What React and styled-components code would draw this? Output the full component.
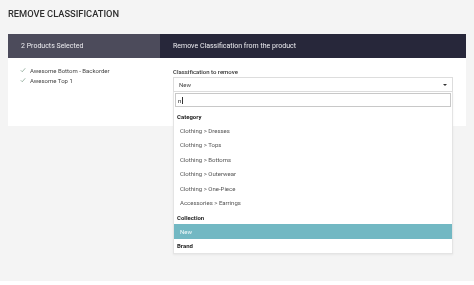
import React from 'react';
import styled, { createGlobalStyle } from 'styled-components';

const Global = createGlobalStyle`
  html, body { margin: 0; padding: 0; background: #fff; }
  body { font-family: Roboto, "Liberation Sans", sans-serif; -webkit-font-smoothing: antialiased; }
  * { box-sizing: border-box; }
`;

const Page = styled.div`
  height: 281px;
  background: #f4f4f4;
  padding: 0 8px;
  will-change: transform;
`;

const Title = styled.h1`
  margin: 0;
  height: 34px;
  padding-top: 8px;
  font-size: 9.3px;
  font-weight: 500;
  line-height: 12px;
  color: #2e2e2e;
  white-space: nowrap;
`;

const Panel = styled.div`
  background: #fff;
`;

const Header = styled.div`
  display: grid;
  grid-template-columns: 152px 1fr;
  height: 24px;
`;

const HeaderCell = styled.div`
  display: flex;
  align-items: center;
  padding-left: ${({ pad }) => pad}px;
  background: ${({ dark }) => (dark ? '#27273a' : '#4c4b5b')};
  color: #ececf0;
  font-size: 7px;
`;

const Body = styled.div`
  display: grid;
  grid-template-columns: 152px 1fr;
  height: 68px;
`;

const ProductList = styled.ul`
  list-style: none;
  margin: 0;
  padding: 7px 0 0 12px;
`;

const Product = styled.li`
  display: flex;
  align-items: center;
  gap: 3px;
  height: 10px;
  font-size: 6px;
  color: #444;
`;

const Check = styled.span`
  width: 6px;
  height: 6px;
  display: inline-flex;
  margin-right: 1px;
`;

const Form = styled.div`
  padding: 10px 13px 0 13px;
`;

const Label = styled.div`
  font-size: 6px;
  font-weight: 500;
  color: #333;
  height: 9px;
  line-height: 8px;
`;

const SelectWrap = styled.div`
  position: relative;
`;

const SelectBox = styled.div`
  display: flex;
  align-items: center;
  justify-content: space-between;
  height: 15px;
  padding: 0 5px;
  border: 1px solid #ddd;
  background: #fff;
  font-size: 6px;
  color: #444;
`;

const Caret = styled.span`
  width: 0;
  height: 0;
  border-left: 2px solid transparent;
  border-right: 2px solid transparent;
  border-top: 2.5px solid #333;
`;

const Dropdown = styled.div`
  position: absolute;
  left: 0;
  right: 0;
  top: 15px;
  background: #fff;
  border: 1px solid #e4e4e4;
  border-top: none;
  box-shadow: 0 1px 2px rgba(0, 0, 0, 0.06);
`;

const SearchRow = styled.div`
  padding: 1px 1px 2px 1px;
`;

const Search = styled.div`
  height: 14px;
  border: 1px solid #c8c8c8;
  font-size: 6px;
  color: #222;
  display: flex;
  align-items: center;
  padding-left: 2px;
`;

const Cursor = styled.span`
  display: inline-block;
  width: 0.6px;
  height: 7px;
  background: #333;
  margin-left: 0.5px;
`;

const GroupHead = styled.div`
  height: 14px;
  display: flex;
  align-items: center;
  padding-left: 3px;
  font-size: 6px;
  font-weight: 700;
  color: #1e1e1e;
`;

const Option = styled.div`
  height: 14.5px;
  display: flex;
  align-items: center;
  padding-left: 6px;
  font-size: 6px;
  color: ${({ active }) => (active ? '#f2fafb' : '#555')};
  background: ${({ active }) => (active ? '#72b8c3' : 'transparent')};
`;

const products = ['Awesome Bottom - Backorder', 'Awesome Top 1'];

const groups = [
  {
    name: 'Category',
    items: [
      'Clothing > Dresses',
      'Clothing > Tops',
      'Clothing > Bottoms',
      'Clothing > Outerwear',
      'Clothing > One-Piece',
      'Accessories > Earrings',
    ],
  },
  { name: 'Collection', items: ['New'] },
  { name: 'Brand', items: [] },
];

const CheckIcon = () => (
  <Check>
    <svg width="6" height="6" viewBox="0 0 12 12" fill="none">
      <path d="M1.5 6.5 L4.5 9.5 L10.5 2.5" stroke="#7a9a86" strokeWidth="1.4" />
    </svg>
  </Check>
);

export default function App() {
  return (
    <>
      <Global />
      <Page>
        <Title>REMOVE CLASSIFICATION</Title>
        <Panel>
          <Header>
            <HeaderCell pad={13}>2 Products Selected</HeaderCell>
            <HeaderCell dark pad={13}>Remove Classification from the product</HeaderCell>
          </Header>
          <Body>
            <ProductList>
              {products.map((p) => (
                <Product key={p}>
                  <CheckIcon />
                  {p}
                </Product>
              ))}
            </ProductList>
            <Form>
              <Label>Classification to remove</Label>
              <SelectWrap>
                <SelectBox>
                  New
                  <Caret />
                </SelectBox>
                <Dropdown>
                  <SearchRow>
                    <Search>
                      n<Cursor />
                    </Search>
                  </SearchRow>
                  {groups.map((g) => (
                    <div key={g.name}>
                      <GroupHead>{g.name}</GroupHead>
                      {g.items.map((it) => (
                        <Option key={it} active={it === 'New'}>
                          {it}
                        </Option>
                      ))}
                    </div>
                  ))}
                </Dropdown>
              </SelectWrap>
            </Form>
          </Body>
        </Panel>
      </Page>
    </>
  );
}
